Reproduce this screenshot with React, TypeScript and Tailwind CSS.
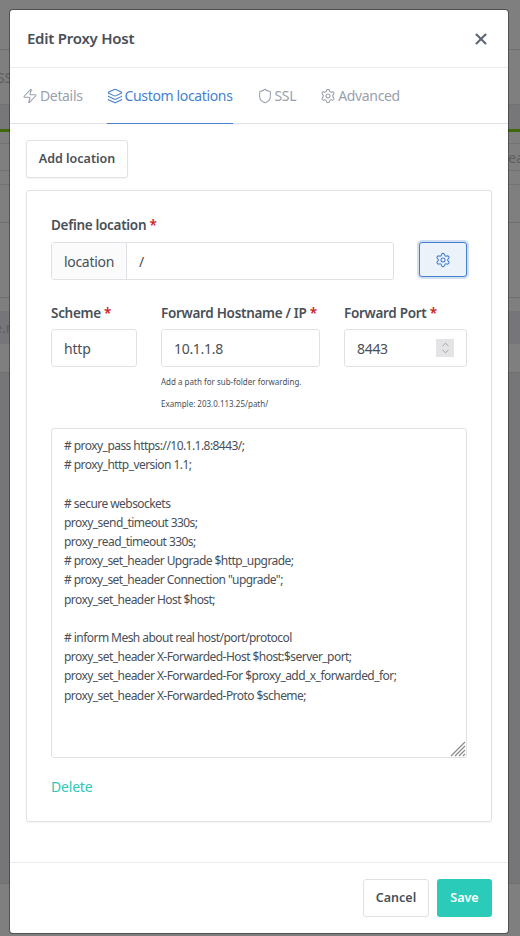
import React from 'react';
import { Zap, Layers, Shield, Settings, X, ChevronUp, ChevronDown } from 'lucide-react';

const FONT = "font-['Noto_Sans','Open_Sans',sans-serif]";

const configText = `# proxy_pass https://10.1.1.8:8443/;
# proxy_http_version 1.1;

# secure websockets
proxy_send_timeout 330s;
proxy_read_timeout 330s;
# proxy_set_header Upgrade $http_upgrade;
# proxy_set_header Connection "upgrade";
proxy_set_header Host $host;

# inform Mesh about real host/port/protocol
proxy_set_header X-Forwarded-Host $host:$server_port;
proxy_set_header X-Forwarded-For $proxy_add_x_forwarded_for;
proxy_set_header X-Forwarded-Proto $scheme;`;

const tabs = [
  { label: 'Details', icon: Zap },
  { label: 'Custom locations', icon: Layers, active: true },
  { label: 'SSL', icon: Shield },
  { label: 'Advanced', icon: Settings },
];

const Label = ({ text, tight }: { text: string; tight?: boolean }) => (
  <label
    className={`block text-[13.5px] leading-[20px] font-semibold text-[#495057] tracking-[-0.3px] whitespace-nowrap ${
      tight ? 'mb-[6px]' : 'mb-[7px]'
    }`}
  >
    {text} <span className="text-[#cd201f]">*</span>
  </label>
);

// the page behind the dialog, dimmed
const BackgroundPage = () => (
  <div className="w-[520px] h-[936px] flex flex-col bg-[#7f7f7f] text-[14px] text-[#5e5e5e]">
    <div className="h-[50px] border-b border-[#707070]" />
    <div className="h-[54px] flex items-center -ml-[3px]">SS</div>
    <div className="h-[25px] border-t border-[#727272] bg-[#77777a]" />
    <div className="h-[3px] bg-[#3f6a0c]" />
    <div className="h-[12px] border-b border-[#727272]" />
    <div className="h-[27px] border-b border-[#727272] flex items-center justify-end -mr-[4px]">Sea</div>
    <div className="h-[14px] border-b border-[#727272]" />
    <div className="h-[38px] border-b border-[#6f6f6f]" />
    <div className="h-[75px] border-b border-[#6f6f6f]" />
    <div className="h-[13px]" />
    <div className="h-[33px] bg-[#75757a] flex items-center -ml-[18px]">file.n</div>
    <div className="h-[28px]" />
    <div className="h-[512px] border-t border-b border-[#6f6f6f] bg-[#767679]" />
  </div>
);

export default function App() {
  return (
    <div className={`${FONT} relative w-[520px] h-[936px] overflow-hidden`}>
      <BackgroundPage />

      {/* modal */}
      <div className="absolute left-[10px] top-[10px] w-[498px] h-[923px] bg-white rounded-[3px] flex flex-col shadow-[0_0_0_1px_rgba(0,0,0,0.35)]">
        <div className="h-[58px] shrink-0 flex items-center justify-between pl-[17px] pr-[18px] border-b border-[#e9ecef]">
          <h2 className="text-[15px] font-semibold text-[#495057] tracking-[-0.25px]">Edit Proxy Host</h2>
          <X size={18} strokeWidth={2.8} className="text-[#5f6873]" />
        </div>

        <div className="h-[56px] shrink-0 flex pl-[12px] gap-[24px] border-b border-[#dee2e6]">
          {tabs.map(({ label, icon: Icon, active }) => (
            <div
              key={label}
              className={`flex items-center gap-[2px] -mb-px border-b text-[14px] tracking-[-0.35px] ${
                active ? 'text-[#467fcf] border-[#467fcf]' : 'text-[#9aa0ac] border-transparent'
              }`}
            >
              <Icon size={16} strokeWidth={1.6} />
              {label}
            </div>
          ))}
        </div>

        <div className="flex-1 px-[16px] pt-[16px]">
          <button className="block w-[102px] h-[38px] bg-white border border-[#dee2e6] rounded-[3px] text-[12.5px] font-semibold text-[#495057] shadow-[0_1px_2px_rgba(0,0,0,0.05)]">
            Add location
          </button>

          <div className="mt-[12px] h-[632px] border border-[#dee2e6] rounded-[3px] shadow-[0_1px_2px_rgba(0,0,0,0.05)] px-[24px] pt-[24px]">
            <Label text="Define location" />
            <div className="flex justify-between">
              <div className="w-[343px] h-[38px] flex border border-[#dee2e6] rounded-[3px] text-[14px] text-[#495057]">
                <span className="w-[75px] flex items-center justify-center bg-[#fbfbfc] border-r border-[#dee2e6] rounded-l-[3px] tracking-[-0.3px]">
                  location
                </span>
                <span className="flex items-center pl-[12px]">/</span>
              </div>
              <button className="w-[48px] h-[35px] flex items-center justify-center bg-[#ecf2fa] border border-[#467fcf] rounded-[3px] shadow-[0_0_0_2px_rgba(70,127,207,0.25)] text-[#467fcf]">
                <Settings size={16} strokeWidth={1.6} />
              </button>
            </div>

            <div className="mt-[23px] flex gap-[24px]">
              <div className="w-[86px]">
                <Label text="Scheme" tight />
                <div className="h-[38px] flex items-center pl-[12px] border border-[#dee2e6] rounded-[3px] text-[14px] text-[#495057] tracking-[-0.2px]">
                  http
                </div>
              </div>
              <div className="w-[159px]">
                <Label text="Forward Hostname / IP" tight />
                <div className="h-[38px] flex items-center pl-[12px] border border-[#dee2e6] rounded-[3px] text-[14px] text-[#495057] tracking-[-0.3px]">
                  10.1.1.8
                </div>
                <p className="mt-[9px] text-[8px] leading-[11px] text-[#495057] whitespace-nowrap">Add a path for sub-folder forwarding.</p>
                <p className="mt-[11px] text-[8px] leading-[11px] text-[#495057] whitespace-nowrap">Example: 203.0.113.25/path/</p>
              </div>
              <div className="w-[123px]">
                <Label text="Forward Port" tight />
                <div className="h-[38px] flex items-center justify-between pl-[12px] pr-[12px] border border-[#dee2e6] rounded-[3px] text-[14px] text-[#495057] tracking-[-0.3px]">
                  8443
                  <span className="w-[18px] h-[18px] flex flex-col items-center justify-center bg-[#e4e4e7] text-[#8f8f96]">
                    <ChevronUp size={11} strokeWidth={1.75} className="-mb-[2px]" />
                    <ChevronDown size={11} strokeWidth={1.75} className="-mt-[2px]" />
                  </span>
                </div>
              </div>
            </div>

            <div className="mt-[19px] h-[330px] relative border border-[#dee2e6] rounded-[3px] px-[12px] pt-[7px]">
              <pre className={`${FONT} text-[12px] leading-[19.2px] text-[#495057] tracking-[-0.55px] whitespace-pre-wrap`}>{configText}</pre>
              <svg className="absolute right-0 bottom-0" width="16" height="16" viewBox="0 0 16 16" fill="none" stroke="#8a8a8a" strokeWidth="1.2">
                <path d="M1 15 15 1M5 15 15 5M9 15 15 9M13 15 15 13" />
              </svg>
            </div>

            <div className="mt-[18px] text-[14px] text-[#2dc9b7] tracking-[-0.2px]">Delete</div>
          </div>
        </div>

        <div className="h-[71px] shrink-0 flex items-center justify-end gap-[8px] pr-[16px] border-t border-[#e9ecef]">
          <button className="w-[66px] h-[38px] bg-white border border-[#dee2e6] rounded-[3px] text-[12.5px] font-semibold text-[#495057]">
            Cancel
          </button>
          <button className="w-[55px] h-[38px] bg-[#2bcbba] rounded-[3px] text-[12.5px] font-semibold text-white">Save</button>
        </div>
      </div>
    </div>
  );
}
